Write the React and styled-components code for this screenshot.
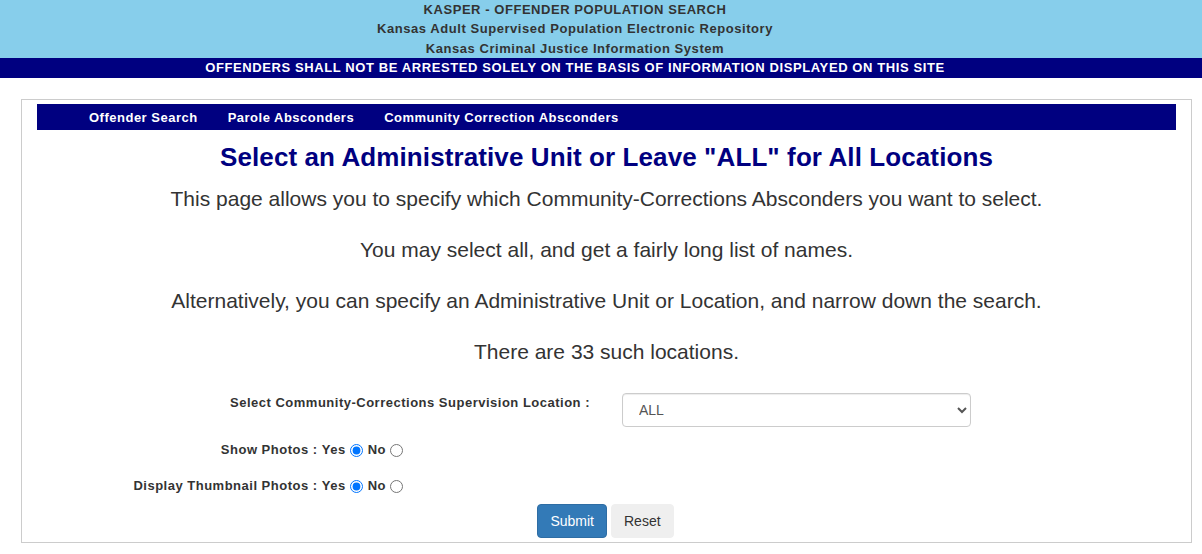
import React, {useState} from "react";
import styled, {createGlobalStyle} from "styled-components";

const GlobalStyle = createGlobalStyle`
  body {
    margin: 0;
    background: #fff;
    font-family: "Liberation Sans", Arial, Helvetica, sans-serif;
    color: #333;
  }
`;

const Banner = styled.header`
  background-color: #87ceeb;
  padding-right: 52px;
  text-align: center;
`;

const BannerLine = styled.div`
  font-size: 13px;
  font-weight: bold;
  letter-spacing: 0.55px;
  line-height: 19.4px;
  color: #333;
`;

const Warning = styled.div`
  background-color: #000080;
  color: #fff;
  font-size: 13px;
  font-weight: bold;
  letter-spacing: 0.6px;
  line-height: 20px;
  height: 20px;
  text-align: center;
  padding-right: 52px;
`;

const Container = styled.main`
  box-sizing: border-box;
  width: 1171px;
  margin: 21px 0 0 21px;
  border: 1px solid #ccc;
  padding: 4px 15px 4px 15px;
`;

const NavBar = styled.nav`
  background-color: #000080;
  height: 26px;
  display: flex;
  align-items: center;
  gap: 30px;
  padding-left: 52px;
`;

const NavLink = styled.a`
  color: #fff;
  font-size: 13px;
  font-weight: bold;
  letter-spacing: 0.5px;
  text-decoration: none;
  cursor: pointer;
`;

const Heading = styled.h1`
  margin: 13px 0 14px;
  font-size: 26px;
  letter-spacing: 0.1px;
  line-height: 28px;
  color: #000080;
  text-align: center;
`;

const Para = styled.p`
  margin: 0 0 23px;
  font-size: 21px;
  line-height: 28px;
  color: #333;
  text-align: center;
`;

const FormRow = styled.div`
  display: flex;
  align-items: flex-start;
  margin-top: ${props => props.top || 0}px;
`;

const LabelCell = styled.label`
  width: ${props => props.width}px;
  display: flex;
  justify-content: flex-end;
  align-items: center;
  font-size: 13px;
  font-weight: bold;
  letter-spacing: 0.5px;
  line-height: 20px;
  color: #333;
  white-space: nowrap;
`;

const Radio = styled.input`
  margin: 0 5px 0 4px;
  width: 13px;
  height: 13px;
`;

const Select = styled.select`
  box-sizing: border-box;
  margin-left: 32px;
  width: 349px;
  height: 34px;
  padding: 6px 12px;
  font-family: inherit;
  font-size: 14px;
  color: #555;
  background-color: #fff;
  border: 1px solid #ccc;
  border-radius: 4px;
  box-shadow: inset 0 1px 1px rgba(0, 0, 0, 0.075);
`;

const Buttons = styled.div`
  display: flex;
  justify-content: center;
  gap: 4px;
  margin-top: 8px;
  padding-right: 2px;
`;

const Button = styled.button`
  box-sizing: border-box;
  height: 34px;
  padding: 6px 12px;
  font-family: inherit;
  font-size: 14px;
  line-height: 20px;
  border-radius: 4px;
  cursor: pointer;
  border: 1px solid ${props => props.primary ? "#2e6da4" : "#efefef"};
  background-color: ${props => props.primary ? "#337ab7" : "#efefef"};
  color: ${props => props.primary ? "#fff" : "#333"};
`;

const YesNo = ({name, value, onChange}) => (
  <>
    &nbsp;Yes
    <Radio type="radio" name={name} checked={value === "Y"} onChange={() => onChange("Y")}/>
    No
    <Radio type="radio" name={name} checked={value === "N"} onChange={() => onChange("N")}/>
  </>
);

const App = () => {
  const [photos, setPhotos] = useState("Y");
  const [thumbs, setThumbs] = useState("Y");
  const [location, setLocation] = useState("ALL");

  return (
    <>
      <GlobalStyle/>
      <Banner>
        <BannerLine>KASPER - OFFENDER POPULATION SEARCH</BannerLine>
        <BannerLine>Kansas Adult Supervised Population Electronic Repository</BannerLine>
        <BannerLine>Kansas Criminal Justice Information System</BannerLine>
      </Banner>
      <Warning>OFFENDERS SHALL NOT BE ARRESTED SOLELY ON THE BASIS OF INFORMATION DISPLAYED ON THIS SITE</Warning>
      <Container>
        <NavBar>
          <NavLink>Offender Search</NavLink>
          <NavLink>Parole Absconders</NavLink>
          <NavLink>Community Correction Absconders</NavLink>
        </NavBar>
        <Heading>Select an Administrative Unit or Leave "ALL" for All Locations</Heading>
        <Para>This page allows you to specify which Community-Corrections Absconders you want to select.</Para>
        <Para>You may select all, and get a fairly long list of names.</Para>
        <Para>Alternatively, you can specify an Administrative Unit or Location, and narrow down the search.</Para>
        <Para>There are 33 such locations.</Para>
        <FormRow top={27}>
          <LabelCell width={553}>Select Community-Corrections Supervision Location :</LabelCell>
          <Select value={location} onChange={e => setLocation(e.target.value)}>
            <option value="ALL">ALL</option>
          </Select>
        </FormRow>
        <FormRow top={13}>
          <LabelCell width={371}>Show Photos :<YesNo name="photos" value={photos} onChange={setPhotos}/></LabelCell>
        </FormRow>
        <FormRow top={16}>
          <LabelCell width={371}>Display Thumbnail Photos :<YesNo name="thumbs" value={thumbs} onChange={setThumbs}/></LabelCell>
        </FormRow>
        <Buttons>
          <Button primary>Submit</Button>
          <Button type="reset">Reset</Button>
        </Buttons>
      </Container>
    </>
  );
};

export default App;
